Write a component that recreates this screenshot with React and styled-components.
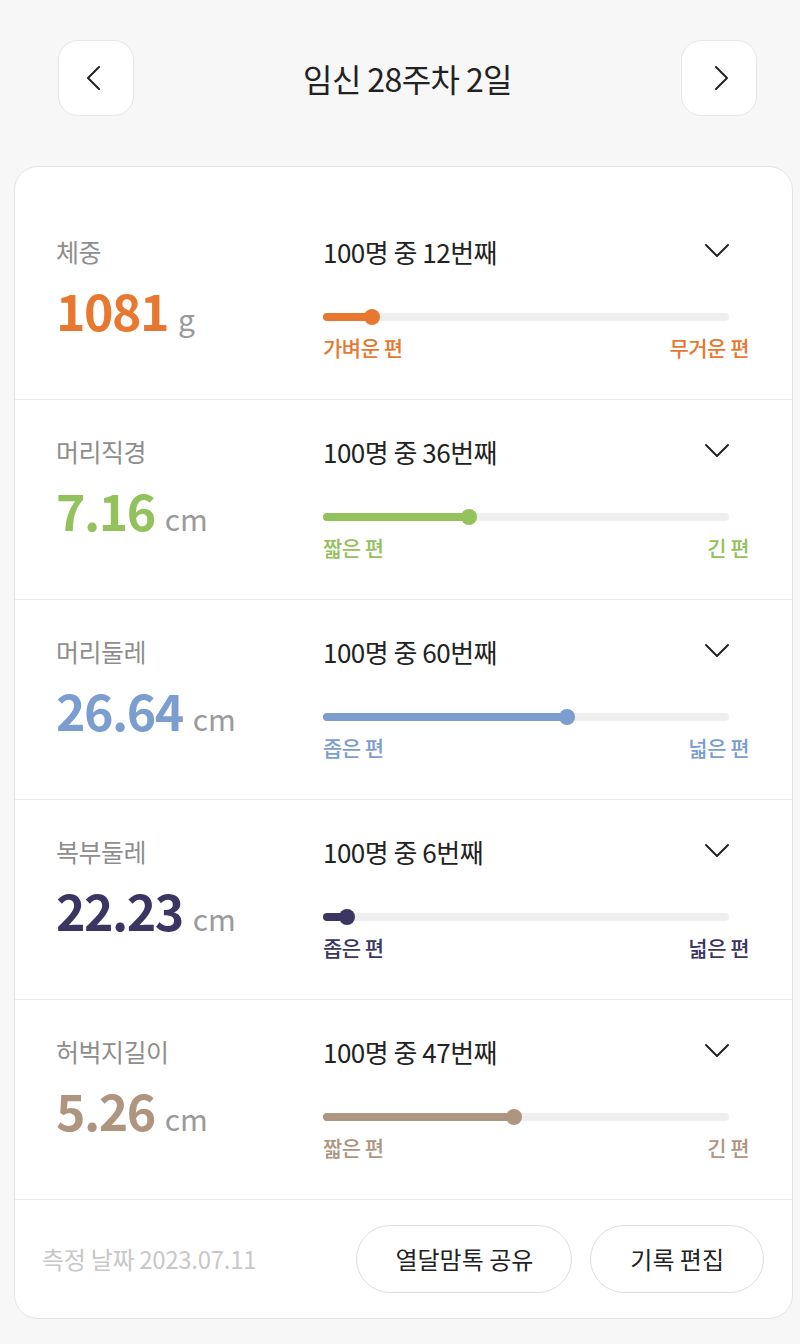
import React from "react";
import styled, { createGlobalStyle } from "styled-components";

const GlobalStyle = createGlobalStyle`
  html, body {
    margin: 0;
    padding: 0;
    background: #f7f7f7;
    font-family: "Noto Sans CJK KR", "Noto Sans", sans-serif;
    color: #222;
  }
  * { box-sizing: border-box; }
`;

const Page = styled.div`
  width: 800px;
  min-height: 1344px;
  padding: 40px 7px 0 14px;
`;

const Header = styled.div`
  display: flex;
  align-items: center;
  justify-content: space-between;
  padding: 0 36px 0 44px;
  height: 76px;
`;

const NavButton = styled.button`
  width: 76px;
  height: 76px;
  border-radius: 20px;
  border: 1px solid #e6e6e6;
  background: #fff;
  display: flex;
  align-items: center;
  justify-content: center;
  padding: 0;
  color: #222;
`;

const Title = styled.h1`
  margin: 0;
  font-size: 32px;
  font-weight: 400;
  letter-spacing: -0.6px;
`;

const Card = styled.div`
  margin-top: 50px;
  background: #fff;
  border: 1px solid #e4e4e4;
  border-radius: 24px;
  padding-top: 33px;
  overflow: hidden;
`;

const Row = styled.div`
  display: grid;
  grid-template-columns: 267px 1fr;
  height: 200px;
  padding: 0 43px 0 41px;
  border-bottom: 1px solid #ebebeb;
`;

const Left = styled.div`
  padding-top: 33px;
`;

const Label = styled.div`
  font-size: 25px;
  line-height: 36px;
  color: #8e8e8e;
  letter-spacing: -0.5px;
`;

const Value = styled.div`
  margin-top: 10px;
  display: flex;
  align-items: baseline;
  gap: 10px;
  color: ${(p) => p.color};
`;

const Number = styled.span`
  font-size: 50px;
  line-height: 60px;
  font-weight: 700;
  letter-spacing: -1.5px;
`;

const Unit = styled.span`
  font-size: 30px;
  color: #9a9a9a;
  font-weight: 400;
`;

const Right = styled.div`
  padding-top: 33px;
`;

const RankLine = styled.div`
  display: flex;
  align-items: center;
  justify-content: space-between;
  height: 36px;
  padding-right: 19px;
`;

const Rank = styled.span`
  font-size: 26px;
  letter-spacing: -0.5px;
  color: #222;
`;

const Slider = styled.div`
  position: relative;
  margin-top: 36px;
  height: 24px;
  width: 406px;
  display: flex;
  align-items: center;
`;

const Track = styled.div`
  width: 100%;
  height: 8px;
  border-radius: 4px;
  background: #eeeeee;
`;

const Fill = styled.div`
  position: absolute;
  left: 0;
  top: 8px;
  height: 8px;
  border-radius: 4px;
  background: ${(p) => p.color};
`;

const Thumb = styled.div`
  position: absolute;
  top: 4px;
  width: 16px;
  height: 16px;
  margin-left: -8px;
  border-radius: 50%;
  background: ${(p) => p.color};
`;

const Ends = styled.div`
  margin-top: 4px;
  display: flex;
  justify-content: space-between;
  font-size: 21px;
  line-height: 28px;
  font-weight: 500;
  letter-spacing: -0.5px;
  color: ${(p) => p.color};
`;

const Footer = styled.div`
  height: 119px;
  margin-top: -1px;
  display: flex;
  align-items: center;
  padding: 0 28px 0 27px;
`;

const DateText = styled.span`
  font-size: 24px;
  color: #c8c8c8;
  letter-spacing: -0.3px;
  flex: 1;
`;

const PillButton = styled.button`
  height: 68px;
  padding: 0 ${(p) => p.pad}px;
  border-radius: 34px;
  border: 1px solid #dedede;
  background: #fff;
  font-family: inherit;
  font-size: 24px;
  color: #222;
  letter-spacing: 0;
  margin-left: ${(p) => p.gap}px;
`;

const Chevron = ({ dir }) => {
  const d = {
    left: "M17 3 L6 14 L17 25",
    right: "M11 3 L22 14 L11 25",
  }[dir];
  return (
    <svg width="28" height="28" viewBox="0 0 28 28" fill="none">
      <path d={d} stroke="#222" strokeWidth="2" strokeLinecap="round" strokeLinejoin="round" />
    </svg>
  );
};

const ChevronDown = () => (
  <svg width="26" height="16" viewBox="0 0 26 16" fill="none">
    <path d="M2 2 L13 13 L24 2" stroke="#222" strokeWidth="2" strokeLinecap="round" strokeLinejoin="round" />
  </svg>
);

const items = [
  { label: "체중", value: "1081", unit: "g", rank: 12, color: "#e8782f", low: "가벼운 편", high: "무거운 편" },
  { label: "머리직경", value: "7.16", unit: "cm", rank: 36, color: "#93c15b", low: "짧은 편", high: "긴 편" },
  { label: "머리둘레", value: "26.64", unit: "cm", rank: 60, color: "#7b9dcf", low: "좁은 편", high: "넓은 편" },
  { label: "복부둘레", value: "22.23", unit: "cm", rank: 6, color: "#3b3661", low: "좁은 편", high: "넓은 편" },
  { label: "허벅지길이", value: "5.26", unit: "cm", rank: 47, color: "#ae957f", low: "짧은 편", high: "긴 편" },
];

const App = () => {
  return (
    <Page>
      <GlobalStyle />
      <Header>
        <NavButton>
          <Chevron dir="left" />
        </NavButton>
        <Title>임신 28주차 2일</Title>
        <NavButton>
          <Chevron dir="right" />
        </NavButton>
      </Header>
      <Card>
        {items.map((it) => (
          <Row key={it.label}>
            <Left>
              <Label>{it.label}</Label>
              <Value color={it.color}>
                <Number>{it.value}</Number>
                <Unit>{it.unit}</Unit>
              </Value>
            </Left>
            <Right>
              <RankLine>
                <Rank>100명 중 {it.rank}번째</Rank>
                <ChevronDown />
              </RankLine>
              <Slider>
                <Track />
                <Fill color={it.color} style={{ width: `${it.rank}%` }} />
                <Thumb color={it.color} style={{ left: `${it.rank}%` }} />
              </Slider>
              <Ends color={it.color}>
                <span>{it.low}</span>
                <span>{it.high}</span>
              </Ends>
            </Right>
          </Row>
        ))}
        <Footer>
          <DateText>측정 날짜 2023.07.11</DateText>
          <PillButton pad={38} gap={0}>열달맘톡 공유</PillButton>
          <PillButton pad={39} gap={18}>기록 편집</PillButton>
        </Footer>
      </Card>
    </Page>
  );
};

export default App;
